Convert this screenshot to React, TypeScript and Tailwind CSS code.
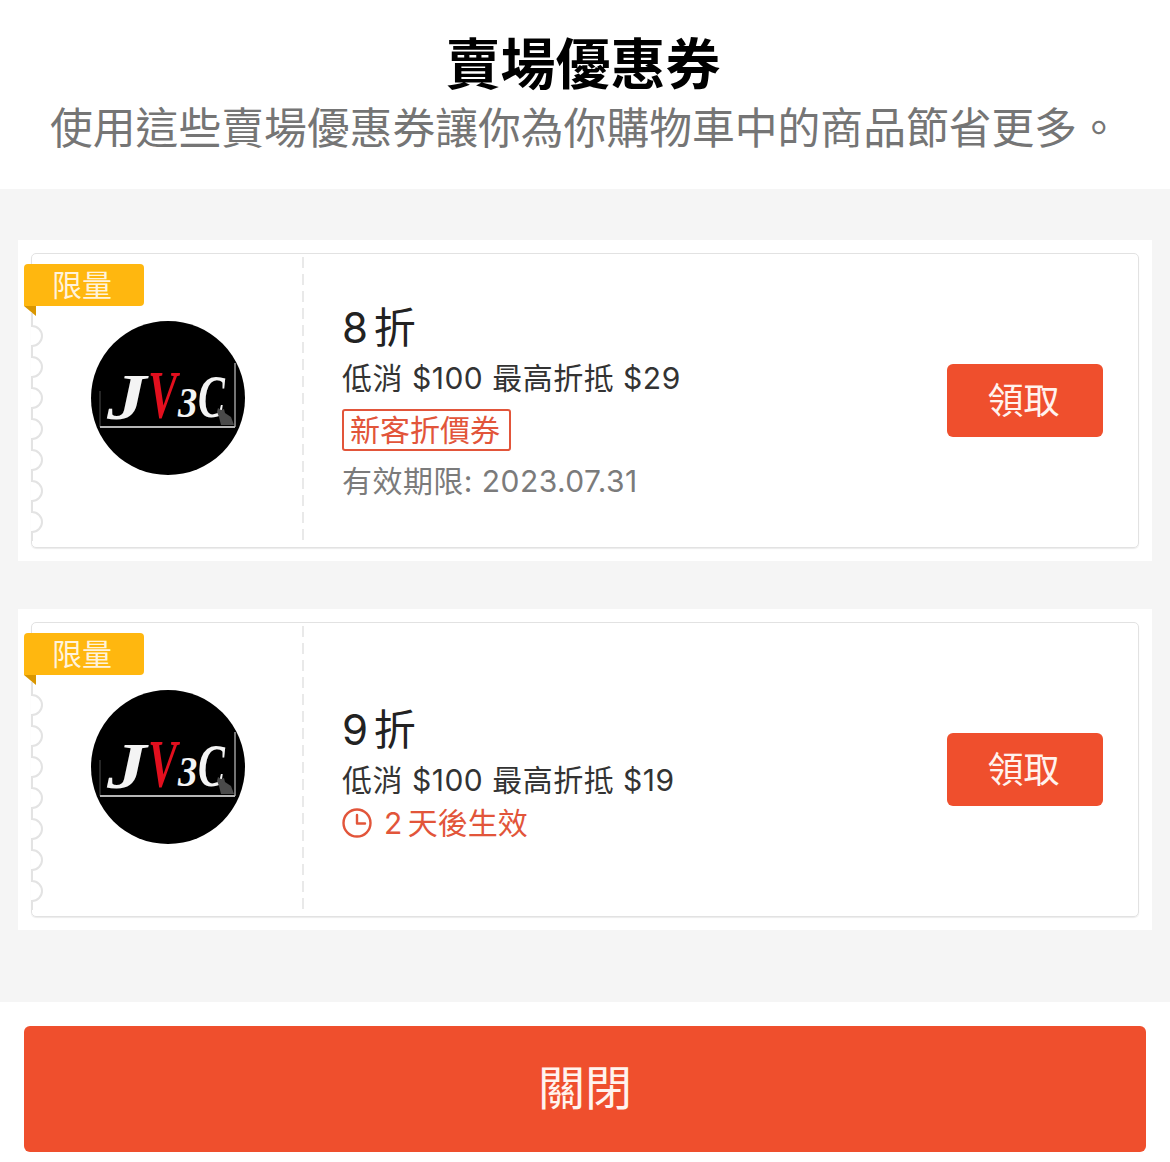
const FONT = "font-['Inter','Noto_Sans_CJK_TC',sans-serif]";

function Logo({ id }: { id: string }) {
  return (
    <svg width="154" height="154" viewBox="0 0 154 154" className="block">
      <defs>
        <linearGradient id={id} x1="0" y1="0" x2="1" y2="0">
          <stop offset="0" stopColor="#000" />
          <stop offset="0.4" stopColor="#1c1c1c" />
          <stop offset="1" stopColor="#8f8f8f" />
        </linearGradient>
      </defs>
      <circle cx="77" cy="77" r="77" fill="#000" />
      <path d="M9 42H144" fill="none" stroke={`url(#${id})`} strokeWidth="2" />
      <path d="M144 42V106" fill="none" stroke="#9a9a9a" strokeWidth="1.5" />
      <path d="M9 70V106" fill="none" stroke="#333" strokeWidth="1.5" />
      <path d="M9 106H144" fill="none" stroke="#b5b5b5" strokeWidth="2" />
      <g fontFamily="'Liberation Serif', serif" fontStyle="italic" fontWeight="700">
        <text fontSize="66" fill="#f4f4f4" transform="translate(16 98) scale(1.2 1)">J</text>
        <text fontSize="68" fill="#e30f1e" transform="translate(57 96) scale(0.64 1)">V</text>
        <text fontSize="42" fill="#f4f4f4" transform="translate(87 96) scale(0.92 1)">3</text>
        <text fontSize="62" fill="#f4f4f4" transform="translate(107 96) scale(0.65 1)">C</text>
      </g>
      <path d="M127 87l3 2 3-1 1 4 6 4 3 8h-13l-2-8-2-5z" fill="#4a4a4a" />
    </svg>
  );
}

function Scallops() {
  let p = "M1 60";
  for (let i = 0; i < 7; i++) {
    const c = 83 + i * 31;
    p += ` V${c - 10} A10 10 0 0 1 1 ${c + 10}`;
  }
  p += " V288";
  return (
    <svg width="14" height="295" viewBox="0 0 14 295" className="absolute left-[-1px] top-[-1px]" aria-hidden="true">
      <path d="M0 56H2.5V288H0Z" fill="#fff" />
      <path d={p} fill="none" stroke="#e3e3e3" strokeWidth="2" />
    </svg>
  );
}

function Voucher({ id, children }: { id: string; children: React.ReactNode }) {
  return (
    <div className="relative h-[321px] bg-white p-[13px]">
      <div className="relative flex h-[295px] rounded-[5px] border border-[#e2e2e2] shadow-[0_1px_1px_rgba(0,0,0,0.08)]">
        <Scallops />
        <div className="relative flex w-[272px] shrink-0 items-center justify-center pb-[5px]">
          <div className="absolute bottom-[7px] right-0 top-[3px] w-[2px] bg-[repeating-linear-gradient(to_bottom,#e9e9e9_0,#e9e9e9_11px,transparent_11px,transparent_17px)]" />
          <Logo id={id} />
        </div>
        {children}
        <div className="ml-auto mr-[35px] flex items-center">
          <button className="flex h-[73px] w-[156px] items-center justify-center rounded-[6px] bg-[#ef4f2d] pr-[3px] pt-[1px] text-[36px] text-[#fff3ee]">
            領取
          </button>
        </div>
      </div>
      <div className="absolute left-[6px] top-[24px] flex h-[42px] w-[120px] items-center justify-center rounded-[4px] rounded-bl-none bg-[#ffb70f] pr-[4px] text-[30px] text-[#fff3dc]">
        限量
      </div>
      <div className="absolute left-[6px] top-[66px] h-0 w-0 border-l-[12px] border-t-[10px] border-l-transparent border-t-[#d99600]" />
    </div>
  );
}

export default function App() {
  return (
    <div className={`flex h-[1162px] w-[1170px] flex-col bg-white ${FONT}`}>
      <header className="flex h-[189px] flex-col items-center bg-white pt-[31px]">
        <h1 className="mb-[2px] pr-[4px] text-[55px] font-bold leading-[66px] text-black">賣場優惠券</h1>
        <p className="text-[42.8px] leading-[60px] text-[#757575]">
          使用這些賣場優惠券讓你為你購物車中的商品節省更多。
        </p>
      </header>

      <main className="flex h-[813px] flex-col gap-[48px] bg-[#f5f5f5] px-[18px] pt-[51px]">
        <Voucher id="logo-a">
          <div className="flex flex-col pl-[38px] pt-[49px]">
            <div className="text-[42px] leading-[50px] text-[#222] [word-spacing:-6px]">8 折</div>
            <div className="text-[30px] leading-[50px] tracking-[0.5px] text-[#333]">低消 $100 最高折抵 $29</div>
            <div className="mt-[6px] flex h-[42px] w-[169px] items-center justify-center rounded-[3px] border-2 border-[#e2553a] pr-[3px] text-[30px] text-[#e2553a]">
              新客折價券
            </div>
            <div className="mt-[8px] text-[30px] leading-[44px] tracking-[0.45px] text-[#7b7b7b]">有效期限: 2023.07.31</div>
          </div>
        </Voucher>
        <Voucher id="logo-b">
          <div className="flex flex-col pl-[38px] pt-[82px]">
            <div className="text-[42px] leading-[50px] text-[#222] [word-spacing:-6px]">9 折</div>
            <div className="text-[30px] leading-[50px] tracking-[0.5px] text-[#333]">低消 $100 最高折抵 $19</div>
            <div className="-mt-[2px] flex h-[40px] items-center gap-[12px] text-[30px] text-[#e2553a]">
              <svg width="30" height="30" viewBox="0 0 30 30" fill="none" stroke="#e2553a" strokeWidth="2.4" strokeLinecap="round" strokeLinejoin="round">
                <circle cx="15" cy="15" r="13.5" />
                <path d="M15 7V15.5H23" />
              </svg>
              <span className="[word-spacing:-3px]">2 天後生效</span>
            </div>
          </div>
        </Voucher>
      </main>

      <footer className="flex h-[160px] bg-white px-[24px] pb-[10px] pt-[24px]">
        <button className="flex h-[126px] w-full items-center justify-center rounded-[6px] bg-[#ef4f2d] pb-[2px] text-[47px] text-[#fff3ee]">
          關閉
        </button>
      </footer>
    </div>
  );
}
